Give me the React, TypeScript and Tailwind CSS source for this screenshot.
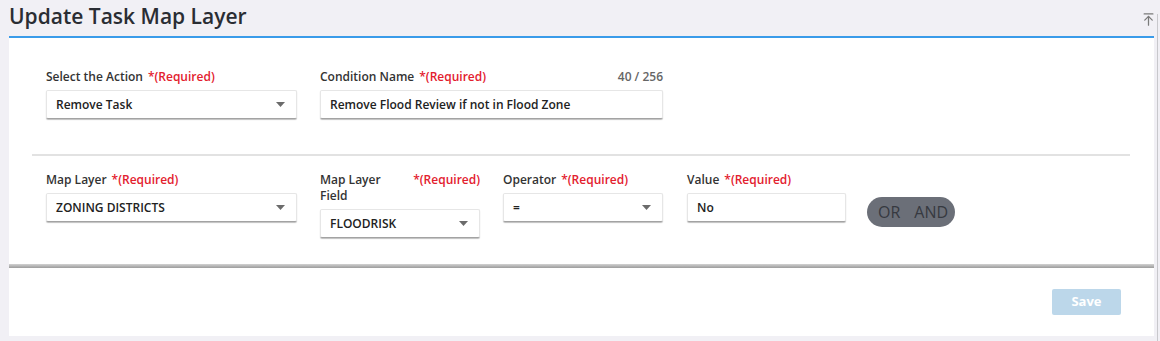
import { ArrowUpToLine } from 'lucide-react';

function Required() {
  return <span className="shrink-0 whitespace-nowrap text-[#e3202e]">*(Required)</span>;
}

function FieldLabel({ text, extra }: { text: string; extra?: string }) {
  return (
    <div className="mb-[5px] flex items-start gap-[5px] text-[12px] font-semibold leading-[16px] text-[#333]">
      <span>{text}</span>
      <Required />
      {extra && <span className="ml-auto whitespace-nowrap text-[#666]">{extra}</span>}
    </div>
  );
}

function Caret() {
  return (
    <svg width="9" height="5" viewBox="0 0 9 5" className="shrink-0">
      <path d="M0 0h9L4.5 5z" fill="#6b6b6b" />
    </svg>
  );
}

function Box({ value, select }: { value: string; select?: boolean }) {
  return (
    <div className="flex h-[29px] items-center justify-between rounded-[2px] border border-[#e6e6e6] border-b-[#a3a3a3] bg-white pl-[9px] pr-[11px] text-[12px] font-semibold text-[#222] shadow-[0_1px_1px_rgba(0,0,0,0.25)]">
      <span>{value}</span>
      {select && <Caret />}
    </div>
  );
}

function Field({ label, value, select, width, extra }: { label: string; value: string; select?: boolean; width: string; extra?: string }) {
  return (
    <div className={width}>
      <FieldLabel text={label} extra={extra} />
      <Box value={value} select={select} />
    </div>
  );
}

export default function App() {
  return (
    <div className="h-[341px] w-[1160px] overflow-hidden bg-[#f1f0f5] font-['Open_Sans',sans-serif]">
      <div className="flex h-full">
        <div className="ml-[9px] flex w-[1145px] flex-col">
          {/* header */}
          <div className="flex h-[36px] items-start justify-between">
            <h1 className="mt-[2px] text-[21px] font-semibold leading-[28px] text-[#2a2d33]">Update Task Map Layer</h1>
            <ArrowUpToLine size={15} strokeWidth={2} className="mr-[-2px] mt-[12px] text-[#7a7a7a]" />
          </div>
          <div className="h-[2px] bg-[#3a9be9]" />

          {/* form */}
          <div className="bg-white px-[23px] pt-[31px]">
            <div className="flex gap-[23px] px-[14px]">
              <Field width="w-[251px]" label="Select the Action" value="Remove Task" select />
              <Field width="w-[343px]" label="Condition Name" value="Remove Flood Review if not in Flood Zone" extra="40 / 256" />
            </div>

            <div className="mt-[35px] h-[2px] w-[1098px] bg-[#e2e2e2]" />

            <div className="flex items-start px-[14px] pb-[26px] pt-[16px]">
              <Field width="w-[251px]" label="Map Layer" value="ZONING DISTRICTS" select />
              <Field width="ml-[23px] w-[160px]" label="Map Layer Field" value="FLOODRISK" select />
              <Field width="ml-[23px] w-[160px]" label="Operator" value="=" select />
              <Field width="ml-[24px] w-[159px]" label="Value" value="No" />
              <div className="ml-[21px] mt-[25px] flex h-[30px] w-[88px] items-center gap-[14px] rounded-full bg-[#6b6f78] pl-[11px] text-[16px] leading-none text-[#363940]">
                <span>OR</span>
                <span>AND</span>
              </div>
            </div>
          </div>

          <div className="h-[4px] bg-gradient-to-b from-[#d2d2d2] to-[#9c9c9c]" />

          {/* footer */}
          <div className="flex h-[68px] items-start justify-end bg-white pr-[33px] pt-[21px]">
            <button className="h-[26px] w-[69px] rounded-[2px] bg-[#bcd7ea] text-[13px] font-bold text-white">Save</button>
          </div>
        </div>
        <div className="ml-[3px] mt-[14px] w-px bg-[#c8c8cc]" />
      </div>
    </div>
  );
}
